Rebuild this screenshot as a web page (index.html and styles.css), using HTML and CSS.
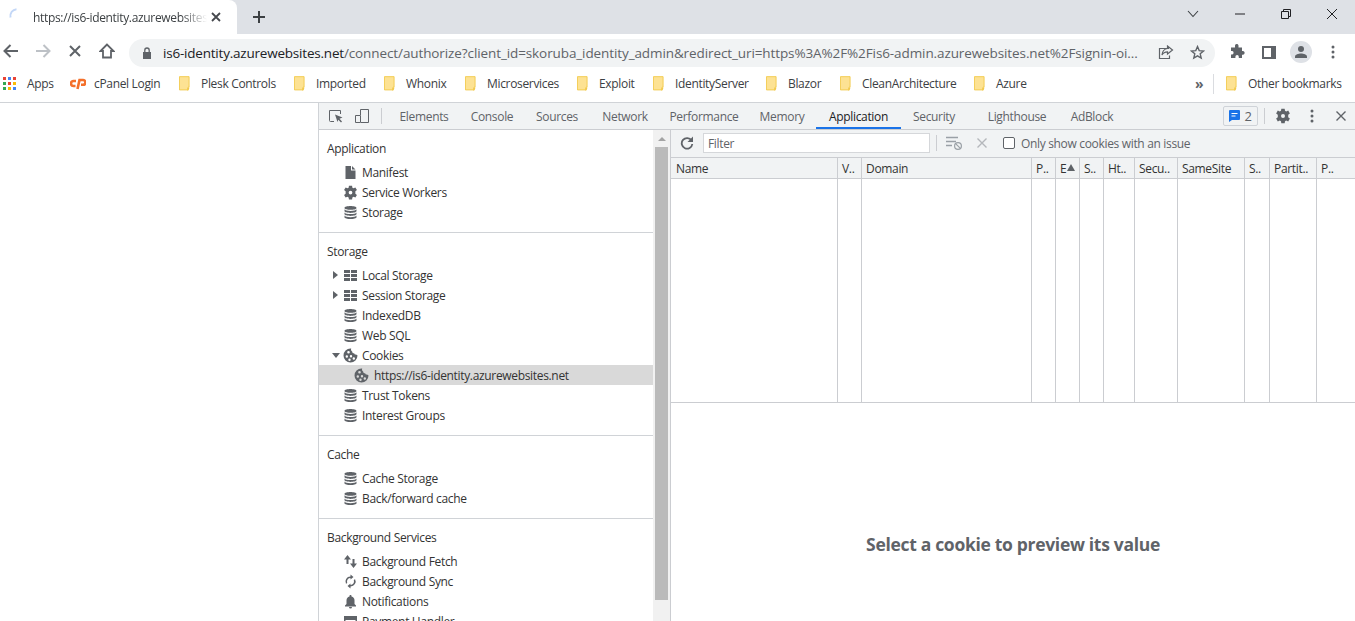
FILE: index.html
```html
<!DOCTYPE html>
<html lang="en">
<head>
<meta charset="utf-8">
<title>DevTools</title>
<link rel="stylesheet" href="styles.css">
</head>
<body>
<svg class="defs" width="0" height="0" aria-hidden="true">
  <symbol id="db" viewBox="0 0 15 15"><path d="M7.500 1C4.500 1 1.500 1.700 1.500 2.900S4.500 4.800 7.500 4.800s6-.7 6-1.900S10.500 1 7.500 1zM1.500 4.300V6C1.500 7.200 4.500 7.900 7.500 7.900s6-.7 6-1.900V4.300C13 5.500 10.500 6 7.500 6S2 5.500 1.500 4.300zM1.500 7.400V9.100C1.500 10.300 4.500 11 7.500 11s6-.7 6-1.900V7.400C13 8.600 10.500 9.100 7.500 9.100S2 8.600 1.500 7.400zM1.500 10.500v1.700C1.500 13.400 4.500 14 7.500 14s6-.6 6-1.800v-1.700C13 11.700 10.500 12.200 7.500 12.200S2 11.700 1.500 10.500z"/></symbol>
  <symbol id="grid" viewBox="-1 -2 15 15"><path d="M0 0h6v3H0zM7 0h6v3H7zM0 4h6v3H0zM7 4h6v3H7zM0 8h6v3H0zM7 8h6v3H7z"/></symbol>
  <symbol id="cookie" viewBox="-.5 -.5 15 15"><path fill-rule="evenodd" d="M7 0a7 7 0 1 0 7 7c0-.6-1-.5-1.500-1-.9.200-1.700-.3-1.800-1.200C9.500 5 8.600 4 8.700 2.900 7.700 2.600 7.200 1.300 7.700.1 7.500 0 7.200 0 7 0zM5 2.500a1.300 1.300 0 1 1 0 2.600 1.300 1.300 0 0 1 0-2.600zM3.300 6.800a1.200 1.200 0 1 1 0 2.400 1.200 1.200 0 0 1 0-2.400zM7.500 6.500a1.200 1.200 0 1 1 0 2.400 1.200 1.200 0 0 1 0-2.400zM6 10a1.200 1.200 0 1 1 0 2.400A1.200 1.200 0 0 1 6 10zM10.300 8.800a1.200 1.200 0 1 1 0 2.400 1.200 1.200 0 0 1 0-2.400z"/></symbol>
  <symbol id="folder" viewBox="0 0 12 16"><path d="M.5.500h10.500v11.500h-1v3H.5z" fill="#fde293" stroke="#f2c94c"/><path d="M9 12.500h2.500L10 15.500H9z" fill="#f2c94c"/></symbol>
  <symbol id="gear" viewBox="0 0 24 24"><path fill-rule="evenodd" d="M14.500 1l.5 3.200 1.800 1 3-1.300 2.500 4.200-2.500 2v3.800l2.500 2-2.500 4.200-3-1.300-1.800 1-.5 3.200h-5L9 19.800l-1.800-1-3 1.300-2.500-4.200 2.500-2v-3.800l-2.500-2 2.500-4.200 3 1.300 1.800-1L9.500 1zM12 9a3 3 0 1 0 0 6 3 3 0 0 0 0-6z"/></symbol>
</svg>

<header class="tabstrip">
  <div class="tab">
    <svg class="spinner" width="16" height="16" viewBox="0 0 16 16"><path d="M2.500 10.500C1.700 6 4.500 2.500 8.500 2.200" fill="none" stroke="#c3d7f7" stroke-width="2"/></svg>
    <span class="tab-title">https://is6-identity.azurewebsites.net/connect</span>
    <svg class="tab-close" width="10" height="10" viewBox="0 0 10 10"><path d="M1 1l8 8M9 1l-8 8" stroke="#45484d" stroke-width="1.800"/></svg>
  </div>
  <svg class="new-tab" width="14" height="14" viewBox="0 0 14 14"><path d="M7 1v12M1 7h12" stroke="#3c4043" stroke-width="2"/></svg>
  <div class="window-controls">
    <svg class="wc-chevron" width="12" height="8" viewBox="0 0 12 8"><path d="M1 1l5 5.500L11 1" fill="none" stroke="#3c4043" stroke-width="1.100"/></svg>
    <svg width="12" height="2" viewBox="0 0 12 2"><path d="M1 1h10" stroke="#202124" stroke-width="1"/></svg>
    <svg width="12" height="12" viewBox="0 0 12 12"><path d="M1.500 3.500h7v7h-7zM3.500 3.500v-2h7v7h-2" fill="none" stroke="#202124"/></svg>
    <svg width="12" height="12" viewBox="0 0 12 12"><path d="M1 1l10 10M11 1L1 11" stroke="#202124" stroke-width="1"/></svg>
  </div>
</header>

<nav class="toolbar">
  <div class="nav-buttons">
    <svg width="16" height="14" viewBox="0 0 16 14"><path d="M15 7H2M7.500 1L1.500 7l6 6" fill="none" stroke="#5f6368" stroke-width="2"/></svg>
    <svg width="16" height="14" viewBox="0 0 16 14"><path d="M1 7h13M8.500 1l6 6-6 6" fill="none" stroke="#bdc1c6" stroke-width="2"/></svg>
    <svg width="14" height="14" viewBox="0 0 14 14"><path d="M2 2l10 10M12 2L2 12" stroke="#5f6368" stroke-width="2"/></svg>
    <svg width="16" height="16" viewBox="0 0 16 16"><path d="M8 1.500L1.500 8H4v6.500h8V8h2.500z" fill="none" stroke="#5f6368" stroke-width="1.800"/></svg>
  </div>
  <div class="omnibox">
    <svg class="lock" width="10" height="12" viewBox="0 0 10 12"><path fill="#5f6368" d="M1 5h8v7H1z"/><path d="M2.800 5V3.200a2.200 2.200 0 0 1 4.400 0V5" fill="none" stroke="#5f6368" stroke-width="1.300"/></svg>
    <span class="url"><b class="host">is6-identity.azurewebsites.net</b>/connect/authorize?client_id=skoruba_identity_admin&amp;redirect_uri=https%3A%2F%2Fis6-admin.azurewebsites.net%2Fsignin-oi...</span>
    <svg class="share" width="16" height="15" viewBox="0 0 16 15"><path d="M11 3.500H1.500v10h10v-3M9.500 1l5 4-5 4V6.800C6.500 6.800 5 8 4 10c.3-3.500 2-6 5.500-6.500z" fill="none" stroke="#5f6368" stroke-width="1.200"/></svg>
    <svg class="star" width="15" height="15" viewBox="0 0 15 15"><path d="M7.500 1.600l1.700 4 4.300.4-3.300 2.800 1 4.200-3.700-2.200-3.700 2.200 1-4.200L1.500 6l4.300-.4z" fill="none" stroke="#5f6368" stroke-width="1.400"/></svg>
  </div>
  <div class="toolbar-end">
    <svg width="16" height="16" viewBox="0 0 16 16"><path fill="#5f6368" d="M6 1.500a1.800 1.800 0 0 1 3.500 0V3.500h3.500V7h1.200a1.900 1.900 0 0 1 0 3.700H13V14H9.800v-1.200a1.700 1.700 0 0 0-3.400 0V14H2v-3.500h1.200a1.800 1.800 0 0 0 0-3.500H2V3.500h4z"/></svg>
    <svg width="14" height="13" viewBox="0 0 14 13"><path fill="#5f6368" fill-rule="evenodd" d="M0 0h14v13H0zM2 2v9h7V2z"/></svg>
    <span class="avatar"><svg width="14" height="14" viewBox="0 0 14 14"><circle cx="7" cy="4" r="3" fill="#5f6368"/><path fill="#5f6368" d="M1 13v-1.500C1 9.500 4.500 8.500 7 8.500s6 1 6 3V13z"/></svg></span>
    <svg width="4" height="14" viewBox="0 0 4 14"><circle cx="2" cy="2" r="1.500" fill="#5f6368"/><circle cx="2" cy="7" r="1.500" fill="#5f6368"/><circle cx="2" cy="12" r="1.500" fill="#5f6368"/></svg>
  </div>
</nav>

<div class="bookmarks">
  <a class="bm bm-apps"><svg width="13" height="13" viewBox="0 0 13 13"><path fill="#ea4335" d="M0 0h3v3H0z"/><path fill="#4285f4" d="M5 0h3v3H5z"/><path fill="#ea4335" d="M10 0h3v3h-3z"/><path fill="#34a853" d="M0 5h3v3H0z"/><path fill="#ea4335" d="M5 5h3v3H5z"/><path fill="#fbbc05" d="M10 5h3v3h-3z"/><path fill="#34a853" d="M0 10h3v3H0z"/><path fill="#fbbc05" d="M5 10h3v3H5z"/><path fill="#4285f4" d="M10 10h3v3h-3z"/></svg>Apps</a>
  <a class="bm bm-cpanel"><svg width="16" height="12" viewBox="0 0 16 12"><path fill="none" stroke="#f4702b" stroke-width="2.600" d="M6 3H3.500a2.500 2.500 0 0 0 0 5H5.500M7.500 11L9.500 2H13a2.400 2.400 0 0 1 0 4.800h-2"/></svg>cPanel Login</a>
  <a class="bm bm-plesk"><svg class="fld"><use href="#folder"/></svg>Plesk Controls</a>
  <a class="bm bm-imported"><svg class="fld"><use href="#folder"/></svg>Imported</a>
  <a class="bm bm-whonix"><svg class="fld"><use href="#folder"/></svg>Whonix</a>
  <a class="bm bm-micro"><svg class="fld"><use href="#folder"/></svg>Microservices</a>
  <a class="bm bm-exploit"><svg class="fld"><use href="#folder"/></svg>Exploit</a>
  <a class="bm bm-ids"><svg class="fld"><use href="#folder"/></svg>IdentityServer</a>
  <a class="bm bm-blazor"><svg class="fld"><use href="#folder"/></svg>Blazor</a>
  <a class="bm bm-clean"><svg class="fld"><use href="#folder"/></svg>CleanArchitecture</a>
  <a class="bm bm-azure"><svg class="fld"><use href="#folder"/></svg>Azure</a>
  <span class="bm-more">»</span>
  <span class="bm-sep"></span>
  <a class="bm"><svg class="fld"><use href="#folder"/></svg>Other bookmarks</a>
</div>

<main class="content">
  <div class="page"></div>
  <section class="devtools">
    <div class="dt-tabs">
      <svg class="dt-ico" width="16" height="16" viewBox="0 0 16 16"><path d="M6 13.500H2.500a1 1 0 0 1-1-1v-10h11V6" fill="none" stroke="#5f6368"/><path fill="#5f6368" d="M7 6.500l7.500 3-3 1.200 2.500 2.800-1 1-2.700-2.800L9.500 14z"/></svg>
      <svg class="dt-ico" width="16" height="16" viewBox="0 0 16 16"><path d="M6.500 7V1.500h8v13H7M1.500 7.500h5v7h-5z" fill="none" stroke="#5f6368"/></svg>
      <span class="dt-sep dt-sep-start"></span>
      <span class="dt-tab t-el">Elements</span>
      <span class="dt-tab t-co">Console</span>
      <span class="dt-tab t-so">Sources</span>
      <span class="dt-tab t-ne">Network</span>
      <span class="dt-tab t-pe">Performance</span>
      <span class="dt-tab t-me">Memory</span>
      <span class="dt-tab t-ap active">Application</span>
      <span class="dt-tab t-se">Security</span>
      <span class="dt-tab t-li">Lighthouse</span>
      <span class="dt-tab t-ad">AdBlock</span>
      <span class="dt-end">
        <span class="issues"><svg width="11" height="12" viewBox="0 0 11 12"><path fill="#1a73e8" d="M1 0h9a1 1 0 0 1 1 1v8a1 1 0 0 1-1 1H3l-3 2V1a1 1 0 0 1 1-1z"/><path stroke="#fff" d="M2.500 3.500h6M2.500 6h4"/></svg>2</span>
        <span class="dt-sep dt-sep-end"></span>
        <svg class="dt-gear" width="16" height="16"><use href="#gear"/></svg>
        <svg class="dt-dots" width="4" height="14" viewBox="0 0 4 14"><circle cx="2" cy="2" r="1.500" fill="#5f6368"/><circle cx="2" cy="7" r="1.500" fill="#5f6368"/><circle cx="2" cy="12" r="1.500" fill="#5f6368"/></svg>
        <svg class="dt-close" width="10" height="10" viewBox="0 0 10 10"><path d="M.5.500l9 9M9.500.500l-9 9" stroke="#5f6368" stroke-width="1.400"/></svg>
      </span>
    </div>
    <div class="dt-body">
      <aside class="sidebar">
        <div class="tree">
          <div class="group">
            <h3>Application</h3>
            <div class="item"><svg class="ic" viewBox="0 0 15 15"><path d="M2.500 1H8v4.500h4.500V14h-10zM9 1l3.500 3.500H9z"/></svg>Manifest</div>
            <div class="item"><svg class="ic"><use href="#gear"/></svg>Service Workers</div>
            <div class="item"><svg class="ic"><use href="#db"/></svg>Storage</div>
          </div>
          <div class="group">
            <h3>Storage</h3>
            <div class="item"><i class="arr right"></i><svg class="ic"><use href="#grid"/></svg>Local Storage</div>
            <div class="item"><i class="arr right"></i><svg class="ic"><use href="#grid"/></svg>Session Storage</div>
            <div class="item"><svg class="ic"><use href="#db"/></svg>IndexedDB</div>
            <div class="item"><svg class="ic"><use href="#db"/></svg>Web SQL</div>
            <div class="item"><i class="arr down"></i><svg class="ic"><use href="#cookie"/></svg>Cookies</div>
            <div class="item child selected"><svg class="ic"><use href="#cookie"/></svg>https://is6-identity.azurewebsites.net</div>
            <div class="item"><svg class="ic"><use href="#db"/></svg>Trust Tokens</div>
            <div class="item"><svg class="ic"><use href="#db"/></svg>Interest Groups</div>
          </div>
          <div class="group">
            <h3>Cache</h3>
            <div class="item"><svg class="ic"><use href="#db"/></svg>Cache Storage</div>
            <div class="item"><svg class="ic"><use href="#db"/></svg>Back/forward cache</div>
          </div>
          <div class="group">
            <h3>Background Services</h3>
            <div class="item"><svg class="ic" viewBox="0 0 15 15"><path d="M4.500 1L1 5.500h2.500V10h2V5.500H8zM10.500 14L14 9.500h-2.500V5h-2v4.500H7z"/></svg>Background Fetch</div>
            <div class="item"><svg class="ic" viewBox="0 0 15 15"><path d="M7.500 2.500V.5l3 2.500-3 2.500V4a3.500 3.500 0 0 0-3.300 4.700L3 9.900A5 5 0 0 1 7.500 2.500zM7.500 12.500v2l-3-2.500 3-2.500V11a3.500 3.500 0 0 0 3.300-4.700L12 5.100a5 5 0 0 1-4.500 7.400z"/></svg>Background Sync</div>
            <div class="item"><svg class="ic" viewBox="0 0 15 15"><path d="M7.500 1c.7 0 1 .4 1 1v.4c2 .5 3 2 3 4V10l1.500 1.500v1H2v-1L3.500 10V6.400c0-2 1-3.500 3-4V2c0-.6.300-1 1-1zM6 13h3a1.500 1.500 0 0 1-3 0z"/></svg>Notifications</div>
            <div class="item cut"><svg class="ic" viewBox="0 0 15 15"><path fill-rule="evenodd" d="M1 2h13v11H1zM2.500 6v5.500h10V6z"/></svg>Payment Handler</div>
          </div>
        </div>
        <div class="scrollbar">
          <span class="sb-arrow"></span>
          <span class="sb-thumb"></span>
        </div>
      </aside>
      <div class="pane">
        <div class="cookie-toolbar">
          <svg class="refresh" width="14" height="14" viewBox="0 0 14 14"><path d="M11.500 4.500A5.300 5.300 0 1 0 12.300 8" fill="none" stroke="#5f6368" stroke-width="1.800"/><path fill="#5f6368" d="M13 .5V6H7.500z"/></svg>
          <span class="filter">Filter</span>
          <span class="ct-sep"></span>
          <svg class="clear-filter" width="17" height="14" viewBox="0 0 17 14"><path d="M0 1.500h12M0 5.500h10M0 9.500h6" stroke="#9aa0a6" stroke-width="1.300"/><circle cx="12" cy="10" r="3.400" fill="none" stroke="#9aa0a6" stroke-width="1.200"/><path d="M9.800 7.800l4.400 4.400" stroke="#9aa0a6" stroke-width="1.200"/></svg>
          <svg class="clear-x" width="10" height="10" viewBox="0 0 10 10"><path d="M.5.500l9 9M9.500.500l-9 9" stroke="#b4b7bb" stroke-width="1.400"/></svg>
          <span class="checkbox"></span>
          <span class="cb-label">Only show cookies with an issue</span>
        </div>
        <div class="table">
          <div class="thead">
            <span>Name</span><span>V..</span><span>Domain</span><span>P..</span><span class="sorted">E<i></i></span><span>S..</span><span>Ht..</span><span>Secu..</span><span>SameSite</span><span>S..</span><span>Partit..</span><span>P..</span>
          </div>
          <div class="tbody">
            <span></span><span></span><span></span><span></span><span></span><span></span><span></span><span></span><span></span><span></span><span></span><span></span>
          </div>
        </div>
        <div class="preview">Select a cookie to preview its value</div>
      </div>
    </div>
  </section>
</main>
</body>
</html>
```
FILE: styles.css
```css
* { box-sizing: border-box; }
html, body { margin: 0; padding: 0; height: 621px; overflow: hidden; background: #fff; }
body { font-family: "Open Sans", "Noto Sans", sans-serif; font-size: 12px; color: #333; letter-spacing: -.33px; }
svg { display: block; flex: none; }
.defs { position: absolute; }

.tabstrip { height: 34px; background: #dee1e6; display: flex; align-items: stretch; }
.tab { width: 237px; background: #fff; border-top-right-radius: 8px; display: flex; align-items: center; padding-left: 8px; }
.spinner { margin-right: 9px; margin-top: -4px; }
.tab-title { width: 174px; white-space: nowrap; overflow: hidden; color: #3c4043; -webkit-mask-image: linear-gradient(90deg, #000 85%, transparent); mask-image: linear-gradient(90deg, #000 85%, transparent); }
.tab-close { margin-left: 4px; }
.new-tab { margin: 10px 0 0 15px; }
.window-controls { margin-left: auto; display: grid; grid-template-columns: repeat(4, 46px); justify-items: center; align-items: center; width: 184px; padding: 0 0 6px; }
.wc-chevron { margin-right: 2px; }

.toolbar { height: 33px; display: flex; align-items: center; }
.nav-buttons { width: 129px; display: grid; grid-template-columns: repeat(4, 32px); justify-items: center; align-items: center; margin-left: -5px; flex: none; }
.omnibox { margin-left: 5px; width: 1086px; height: 28px; margin-top: 4px; border-radius: 14px; background: #f1f3f4; display: flex; align-items: center; padding-left: 13px; flex: none; }
.lock { margin-right: 11px; }
.url { font-size: 13.5px; letter-spacing: -.1px; color: #5f6368; white-space: nowrap; width: 980px; overflow: hidden; flex: none; }
.host { font-weight: 400; letter-spacing: -.21px; color: #202124; }
.share { margin-left: 15px; }
.star { margin-left: 16px; }
.toolbar-end { display: grid; grid-template-columns: repeat(4, 32px); justify-items: center; align-items: center; margin-left: 6px; margin-top: 3px; flex: none; }
.avatar { width: 22px; height: 22px; border-radius: 50%; background: #dee1e6; display: flex; align-items: center; justify-content: center; }

.bookmarks { height: 36px; padding: 0 0 2px 3px; display: flex; align-items: center; border-bottom: 1px solid #d0d3d7; color: #3c4043; white-space: nowrap; }
.bm { display: flex; align-items: center; gap: 11px; flex: none; }
.fld { width: 11px; height: 15px; }
.bm-apps { width: 67px; }
.bm-cpanel { width: 109px; gap: 8px; }
.bm-plesk { width: 115px; }
.bm-imported { width: 90px; }
.bm-whonix { width: 81px; }
.bm-micro { width: 112px; }
.bm-exploit { width: 76px; }
.bm-ids { width: 113px; }
.bm-blazor { width: 74px; }
.bm-clean { width: 134px; }
.bm-azure { width: 221px; }
.bm-more { width: 18px; font-weight: 700; color: #5f6368; font-size: 14px; flex: none; }
.bm-sep { width: 1px; height: 20px; background: #dadce0; margin-right: 12px; flex: none; }

.content { display: flex; height: 518px; }
.page { width: 318px; flex: none; }
.devtools { flex: 1; min-width: 0; border-left: 1px solid #d0d3d7; display: flex; flex-direction: column; }
.dt-tabs { height: 27px; background: #f1f3f4; border-bottom: 1px solid #cbcdd1; display: flex; align-items: stretch; color: #5f6368; white-space: nowrap; flex: none; }
.dt-ico { align-self: center; margin-left: 9px; }
.dt-ico + .dt-ico { margin-left: 10px; }
.dt-sep { width: 1px; height: 16px; align-self: center; background: #cbcdd1; flex: none; }
.dt-sep-start { margin: 0 6px 0 11px; }
.dt-tab { display: flex; align-items: center; justify-content: center; height: 26px; flex: none; }
.t-el { width: 72px; }
.t-co { width: 64px; }
.t-so { width: 66px; }
.t-ne { width: 70px; }
.t-pe { width: 88px; }
.t-me { width: 68px; }
.t-ap { width: 85px; }
.t-se { width: 66px; }
.t-li { width: 100px; }
.t-ad { width: 50px; }
.active { color: #202124; border-bottom: 2px solid #1a73e8; padding-top: 2px; }
.dt-end { margin-left: auto; display: flex; align-items: center; padding-right: 9px; }
.issues { width: 35px; height: 20px; border: 1px solid #cfd3d8; border-radius: 2px; display: flex; align-items: center; justify-content: center; gap: 4px; font-size: 13px; flex: none; }
.dt-sep-end { margin: 0 10px 0 6px; }
.dt-gear { fill: #5f6368; }
.dt-dots { margin-left: 19px; }
.dt-close { margin-left: 22px; }

.dt-body { flex: 1; display: flex; min-height: 0; }
.sidebar { width: 352px; flex: none; display: flex; border-right: 1px solid #cbcdd1; overflow: hidden; }
.tree { flex: 1; min-width: 0; }
.group { padding: 7px 0 10px; border-bottom: 1px solid #d0d3d7; }
.group h3 { margin: 0; height: 25px; line-height: 24px; padding-left: 8px; font-size: 12px; font-weight: 400; color: #333; }
.item { height: 20px; display: flex; align-items: center; position: relative; padding-left: 24px; white-space: nowrap; color: #333; }
.ic { width: 15px; height: 15px; margin-right: 4px; fill: #5f6368; }
.child { padding-left: 35px; }
.child .ic { margin-right: 5px; }
.selected { background: #d9d9d9; }
.arr { position: absolute; width: 0; height: 0; border-style: solid; border-color: transparent; }
.arr.right { left: 14px; top: 6px; border-width: 4px 0 4px 5px; border-left-color: #5f6368; }
.arr.down { left: 13px; top: 8px; border-width: 5px 4px 0 4px; border-top-color: #5f6368; }
.scrollbar { width: 17px; flex: none; background: #f1f1f1; display: flex; flex-direction: column; align-items: center; }
.sb-arrow { width: 0; height: 0; margin: 7px 0 6px; border-style: solid; border-color: transparent; border-width: 0 4px 4px; border-bottom-color: #a3a3a3; }
.sb-thumb { width: 13px; height: 453px; background: #bababa; }

.pane { flex: 1; min-width: 0; display: flex; flex-direction: column; }
.cookie-toolbar { height: 27px; padding-bottom: 1px; background: #f1f3f4; display: flex; align-items: center; flex: none; color: #5f6368; white-space: nowrap; }
.refresh { margin-left: 9px; }
.filter { width: 227px; height: 20px; margin-left: 9px; background: #fff; border: 1px solid #d5d7da; padding-left: 4px; line-height: 20px; color: #5f6368; }
.ct-sep { width: 1px; height: 16px; background: #cbcdd1; margin: 0 9px 0 6px; }
.clear-x { margin: 0 16px 0 14px; }
.checkbox { width: 12px; height: 12px; border: 1px solid #5f6368; border-radius: 2px; background: #fff; margin-right: 6px; }
.table { height: 246px; flex: none; border-bottom: 1px solid #cbcdd1; display: flex; flex-direction: column; }
.thead, .tbody { display: grid; grid-template-columns: 167px 24px 170px 24px 24px 24px 31px 43px 67px 25px 47px 39px; }
.thead { height: 22px; flex: none; background: #f1f3f4; border-top: 1px solid #cbcdd1; border-bottom: 1px solid #cbcdd1; color: #333; white-space: nowrap; }
.thead span { padding-left: 4px; line-height: 21px; border-right: 1px solid #cbcdd1; overflow: hidden; }
.thead span:first-child { padding-left: 5px; }
.sorted i { display: inline-block; width: 0; height: 0; margin-left: 1px; vertical-align: 2px; border-style: solid; border-color: transparent; border-width: 0 4px 7px; border-bottom-color: #5f6368; }
.thead span:last-child, .tbody span:last-child { border-right: 0; }
.tbody { flex: 1; }
.tbody span { border-right: 1px solid #cbcdd1; }
.preview { flex: 1; display: flex; align-items: center; justify-content: center; padding-top: 64px; font-size: 17.5px; font-weight: 700; letter-spacing: -.31px; color: #5f6368; white-space: nowrap; }
```
